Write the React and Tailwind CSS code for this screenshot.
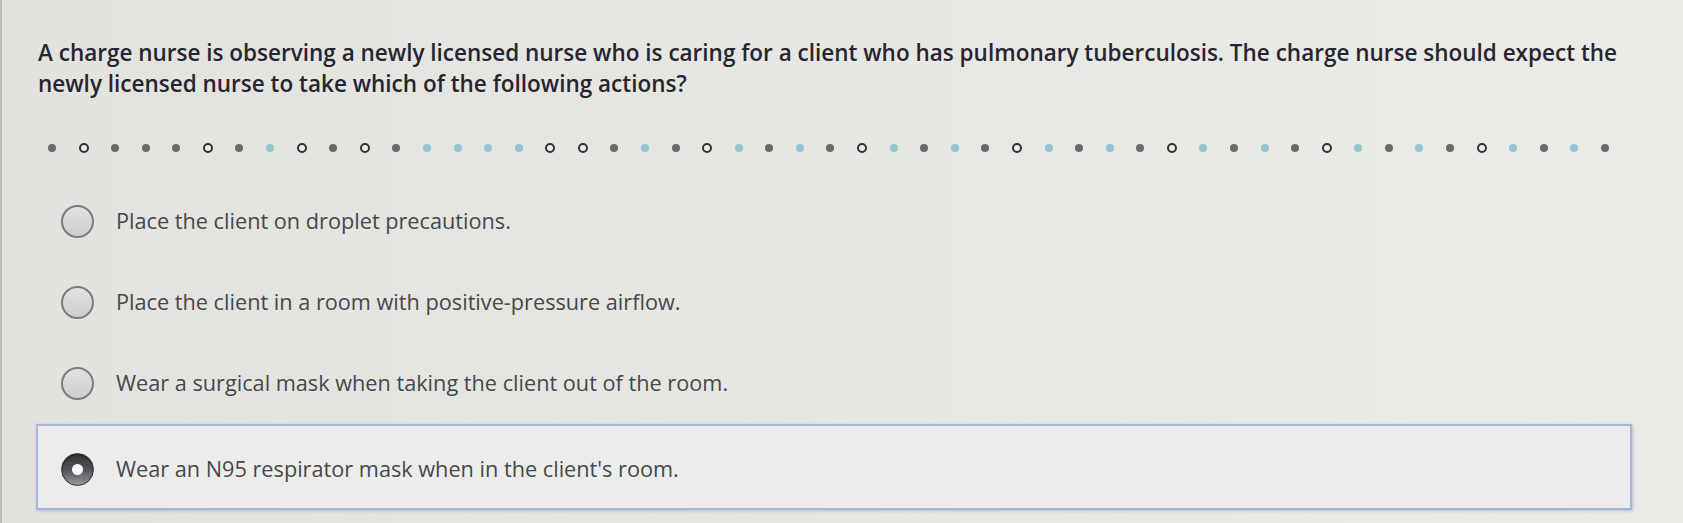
import React from 'react';

// dot pattern across the progress strip: g = grey, r = ring, b = blue
const dots = 'grgggrgbrgrgbbbbrrgbgrbgbgrbgbgrbgbgrbgbgrbgbgrbgbg'.split('').slice(0, 51);

const options = [
  'Place the client on droplet precautions.',
  'Place the client in a room with positive-pressure airflow.',
  'Wear a surgical mask when taking the client out of the room.',
  "Wear an N95 respirator mask when in the client's room.",
];

function Dot({ kind }) {
  if (kind === 'r') {
    return <span className="block w-[10px] h-[10px] rounded-full border-[2.5px] border-[#323238] bg-[#ececea]" />;
  }
  if (kind === 'b') {
    return <span className="block w-[8px] h-[8px] rounded-full bg-[#93c4d1]" />;
  }
  return <span className="block w-[8px] h-[8px] rounded-full bg-[#6a6a6e]" />;
}

function Radio({ checked }) {
  if (checked) {
    return (
      <span className="flex items-center justify-center w-[33px] h-[33px] rounded-full border border-[#333] bg-gradient-to-b from-[#363638] via-[#535358] to-[#9a9a9c] shadow-[inset_0_1px_2px_rgba(0,0,0,0.5)] shrink-0">
        <span className="block w-[11px] h-[11px] rounded-full bg-white" />
      </span>
    );
  }
  return (
    <span className="block w-[33px] h-[33px] rounded-full border-2 border-[#7c7c7e] bg-gradient-to-b from-[#e2e2e2] to-[#cdcdce] shrink-0" />
  );
}

export default function App() {
  return (
    <div className="w-[1683px] h-[523px] overflow-hidden bg-gradient-to-r from-[#e2e2df] to-[#ebebe8] border-l-2 border-[#bdbdba] pt-[37px] font-['Open_Sans',sans-serif]">
      <p className="pl-[36px] text-[22.5px] leading-[31px] font-semibold text-[#27252f]">
        A charge nurse is observing a newly licensed nurse who is caring for a client who has pulmonary tuberculosis. The charge nurse should expect the
        <br />
        newly licensed nurse to take which of the following actions?
      </p>

      <div className="ml-[46px] w-[1561px] mt-[44px] flex justify-between items-center h-[10px]">
        {dots.map((d, i) => (
          <Dot key={i} kind={d} />
        ))}
      </div>

      <div className="mt-[28px] ml-[34px] w-[1596px]">
        {options.map((text, i) => {
          const checked = i === 3;
          return (
            <div
              key={i}
              className={
                checked
                  ? 'flex items-center gap-[22px] h-[86px] pl-[23px] pt-[4px] border-2 border-[#a6b5d8] bg-[#ececea] shadow-[1px_1px_3px_rgba(90,110,160,0.35)]'
                  : 'flex items-center gap-[22px] h-[81px] pl-[23px] border-2 border-transparent'
              }
            >
              <Radio checked={checked} />
              <span className="text-[21.7px] text-[#47474c]">{text}</span>
            </div>
          );
        })}
      </div>
    </div>
  );
}
